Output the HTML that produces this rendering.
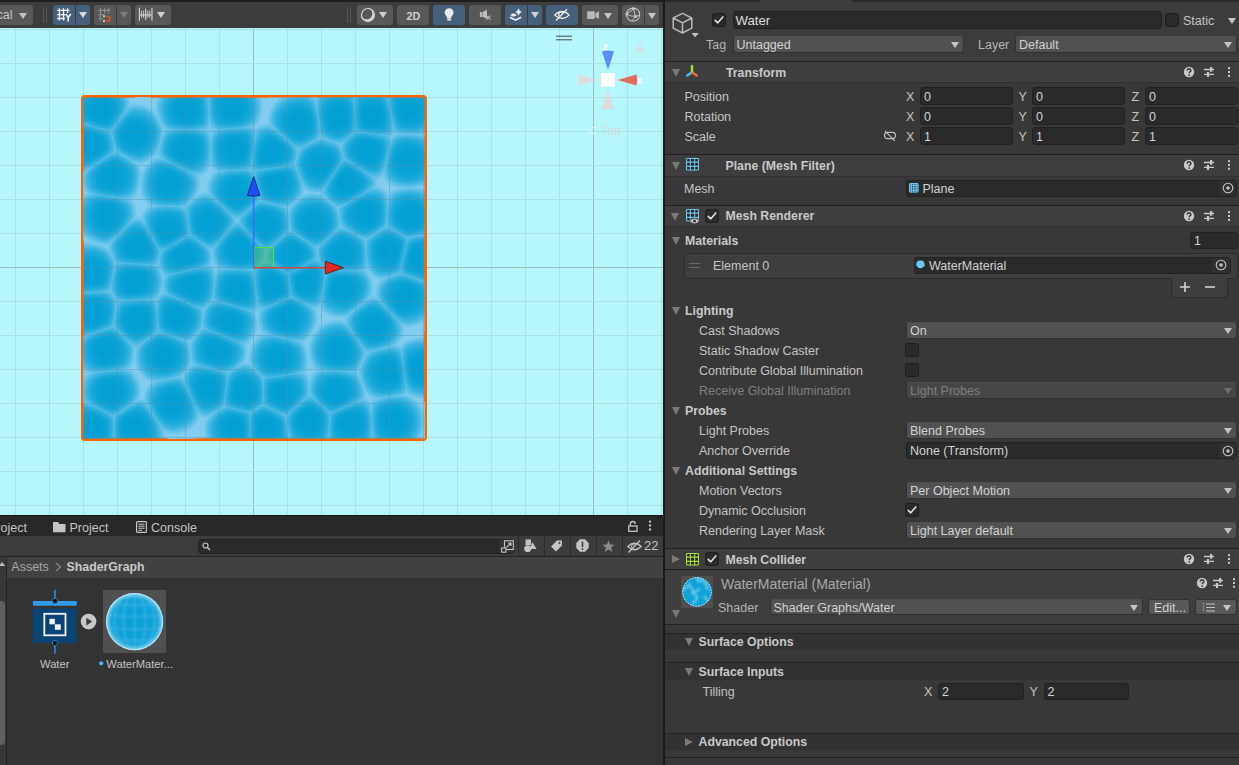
<!DOCTYPE html>
<html><head><meta charset="utf-8">
<style>
*{box-sizing:border-box;margin:0;padding:0}
html,body{width:1239px;height:765px;overflow:hidden;background:#191919;font-family:"Liberation Sans",sans-serif;font-size:12.5px;color:#c4c4c4}
.a{position:absolute}
svg.a{overflow:visible}
.t{position:absolute;white-space:nowrap;line-height:14px}
.b{font-weight:bold;font-size:12.3px;color:#c8c8c8}
.fld{position:absolute;background:#2a2a2a;border:1px solid #212121;border-radius:3px}
.dd{position:absolute;background:#515151;border:1px solid #303030;border-top-color:#4d4d4d;border-radius:3px}
.arr{position:absolute;width:0;height:0;border-left:4.5px solid transparent;border-right:4.5px solid transparent;border-top:6px solid #c4c4c4}
.tri{position:absolute;width:0;height:0;border-left:4.5px solid transparent;border-right:4.5px solid transparent;border-top:8px solid #7a7a7a}
.trir{position:absolute;width:0;height:0;border-top:4.5px solid transparent;border-bottom:4.5px solid transparent;border-left:8px solid #7a7a7a}
.cb{position:absolute;width:14px;height:14px;background:#2a2a2a;border:1px solid #1d1d1d;border-radius:3px}
.btn{position:absolute;top:5px;height:19.5px;background:#585858;border-radius:3px}
.blue{background:#46607c}
</style></head><body>
<div class="a" style="left:0.00px;top:0.00px;width:663.00px;height:2.00px;background:#1e1e1e"></div>
<div class="a" style="left:0.00px;top:2.00px;width:663.00px;height:26.00px;background:#3c3c3c"></div>
<div class="a" style="left:-10.00px;top:5px;width:43.00px;height:19.5px;background:#585858;border-radius:3px"></div>
<div class="t" style="left:-3.5px;top:8px;font-size:12.5px;color:#c4c4c4">cal</div>
<div class="arr" style="left:18.50px;top:12.50px;border-top-color:#c4c4c4"></div>
<div class="a" style="left:53.00px;top:5px;width:22.00px;height:19.5px;background:#46607c;border-radius:3px 0 0 3px"></div>
<div class="a" style="left:76.00px;top:5px;width:14.00px;height:19.5px;background:#46607c;border-radius:0 3px 3px 0"></div>
<div class="a" style="left:94.30px;top:5px;width:21.70px;height:19.5px;background:#585858;border-radius:3px 0 0 3px"></div>
<div class="a" style="left:117.00px;top:5px;width:13.70px;height:19.5px;background:#585858;border-radius:0 3px 3px 0"></div>
<div class="a" style="left:135.00px;top:5px;width:36.00px;height:19.5px;background:#585858;border-radius:3px"></div>
<div class="a" style="left:357.00px;top:5px;width:36.00px;height:19.5px;background:#585858;border-radius:3px"></div>
<div class="a" style="left:397.00px;top:5px;width:32.00px;height:19.5px;background:#585858;border-radius:3px"></div>
<div class="a" style="left:433.00px;top:5px;width:32.00px;height:19.5px;background:#46607c;border-radius:3px"></div>
<div class="a" style="left:469.00px;top:5px;width:32.00px;height:19.5px;background:#585858;border-radius:3px"></div>
<div class="a" style="left:505.00px;top:5px;width:22.00px;height:19.5px;background:#46607c;border-radius:3px 0 0 3px"></div>
<div class="a" style="left:528.00px;top:5px;width:14.00px;height:19.5px;background:#46607c;border-radius:0 3px 3px 0"></div>
<div class="a" style="left:546.00px;top:5px;width:32.00px;height:19.5px;background:#46607c;border-radius:3px"></div>
<div class="a" style="left:582.00px;top:5px;width:36.00px;height:19.5px;background:#585858;border-radius:3px"></div>
<div class="a" style="left:622.00px;top:5px;width:22.00px;height:19.5px;background:#585858;border-radius:3px 0 0 3px"></div>
<div class="a" style="left:645.00px;top:5px;width:13.80px;height:19.5px;background:#585858;border-radius:0 3px 3px 0"></div>
<div class="t" style="left:406.5px;top:8.5px;font-size:10.8px;font-weight:bold;color:#d0d0d0">2D</div>
<svg class="a" style="left:0;top:0" width="663" height="28"><rect x="43" y="7" width="1" height="16" fill="#565656"/><rect x="46" y="7" width="1" height="16" fill="#565656"/><rect x="347" y="7" width="1" height="16" fill="#565656"/><rect x="350" y="7" width="1" height="16" fill="#565656"/><path d="M57 10.3H69.5M57 14.6H65M57 18.5H65M59.4 8.3V20.4M63.5 8.3V20.4M67.6 8.3V13" stroke="#f0f0f0" stroke-width="1.3" fill="none"/><path d="M65.6 13.9L68.2 17.3L70.8 13.9M68.2 17.3V21.6" stroke="#f0f0f0" stroke-width="1.7" fill="none"/><path d="M98.5 10.4H110.4M98.5 14.6H103.5M98.5 18.5H103M100.4 8.3V20.5M104.6 8.3V13.5M108.7 8.3V13.5" stroke="#8c8c8c" stroke-width="1.2" fill="none"/><rect x="103" y="15.2" width="2" height="2" fill="#c8c8c8"/><rect x="103" y="20" width="2" height="2" fill="#c8c8c8"/><path d="M106 16.4H108.5A2.5 2.5 0 0 1 108.5 21.2H106" stroke="#d2572a" stroke-width="1.7" fill="none"/><path d="M139.4 7.8V20.8M152 7.8V20.8M145.7 8.8V20.1" stroke="#d8d8d8" stroke-width="1.1" fill="none"/><path d="M141.6 10.7V17.8M143.6 10.7V17.8M147.8 10.7V17.8M149.8 10.7V17.8" stroke="#d8d8d8" stroke-width="0.9" fill="none"/><path d="M139.4 15H152" stroke="#d8d8d8" stroke-width="1" fill="none"/><circle cx="367.9" cy="14.9" r="7" fill="#d0d0d0"/><circle cx="366.6" cy="13.6" r="5.7" fill="#585858"/><circle cx="367.9" cy="14.9" r="6.4" fill="none" stroke="#d0d0d0" stroke-width="1.2"/><circle cx="449.1" cy="12.6" r="4.4" fill="#ececec"/><rect x="446.8" y="15" width="4.6" height="3.2" fill="#ececec"/><rect x="447" y="18.6" width="4.2" height="1.8" rx="0.9" fill="#ececec"/><rect x="479.9" y="12" width="2" height="5" fill="#bdbdbd"/><path d="M482.5 12L487 9.8V18.5L482.5 17Z" fill="#bdbdbd"/><path d="M486 15.6L490.5 19.5M490.5 15.6L486 19.5" stroke="#bdbdbd" stroke-width="1.1"/><path d="M509.9 15L513.5 13.2L517.2 15L513.5 16.8Z" fill="#ececec"/><path d="M509.9 17.2L515.5 20.1L521.2 17.2" stroke="#ececec" stroke-width="1.7" fill="none"/><path d="M518.6 8.3Q519.2 11.4 522.1 12Q519.2 12.6 518.6 15.7Q518 12.6 515.1 12Q518 11.4 518.6 8.3Z" fill="#ececec"/><path d="M554.7 15.1Q562 8 569.2 15.1Q562 22 554.7 15.1Z" fill="none" stroke="#ececec" stroke-width="1.3"/><path d="M559.5 16.5A2.8 2.8 0 0 1 563.5 12.6" fill="none" stroke="#ececec" stroke-width="1.2"/><path d="M556.1 20.4L567 9.3" stroke="#ececec" stroke-width="1.4"/><rect x="587.1" y="11.2" width="7.7" height="7.8" rx="0.8" fill="#b8b8b8"/><path d="M595.3 13.4L599 11.2V19L595.3 16.8Z" fill="#b8b8b8"/><circle cx="633.1" cy="14.6" r="6.6" fill="none" stroke="#c8c8c8" stroke-width="1.1"/><path d="M626.8 14.1Q631 17.5 639.5 15.5M633.5 8.8L626.8 14.1M633.5 8.8L635.5 16.6L632 21" fill="none" stroke="#c8c8c8" stroke-width="0.9"/><circle cx="633.5" cy="8.8" r="1.5" fill="#c8c8c8"/><circle cx="626.8" cy="14.1" r="1.5" fill="#c8c8c8"/><circle cx="635.5" cy="16.6" r="1.5" fill="#c8c8c8"/></svg>
<div class="arr" style="left:78.50px;top:12.20px;border-top-color:#d8d8d8"></div>
<div class="arr" style="left:119.50px;top:12.20px;border-top-color:#7c7c7c"></div>
<div class="arr" style="left:156.50px;top:12.20px;border-top-color:#d0d0d0"></div>
<div class="arr" style="left:379.00px;top:12.20px;border-top-color:#d0d0d0"></div>
<div class="arr" style="left:530.50px;top:12.20px;border-top-color:#d0d0d0"></div>
<div class="arr" style="left:603.50px;top:12.60px;border-top-color:#c8c8c8"></div>
<div class="arr" style="left:647.70px;top:12.60px;border-top-color:#c8c8c8"></div>
<div class="a" style="left:0;top:28px;width:663px;height:487px;background:#b5f7fb;overflow:hidden">
<svg class="a" style="left:0;top:0" width="663" height="487"><rect x="15" y="0" width="1" height="487" fill="#a8e2e6"/><rect x="49" y="0" width="1" height="487" fill="#a8e2e6"/><rect x="83" y="0" width="1" height="487" fill="#a8e2e6"/><rect x="117" y="0" width="1" height="487" fill="#a8e2e6"/><rect x="151" y="0" width="1" height="487" fill="#a8e2e6"/><rect x="185" y="0" width="1" height="487" fill="#a8e2e6"/><rect x="219" y="0" width="1" height="487" fill="#a8e2e6"/><rect x="253" y="0" width="1" height="487" fill="#9cbcc0"/><rect x="287" y="0" width="1" height="487" fill="#a8e2e6"/><rect x="321" y="0" width="1" height="487" fill="#a8e2e6"/><rect x="355" y="0" width="1" height="487" fill="#a8e2e6"/><rect x="389" y="0" width="1" height="487" fill="#a8e2e6"/><rect x="423" y="0" width="1" height="487" fill="#a8e2e6"/><rect x="457" y="0" width="1" height="487" fill="#a8e2e6"/><rect x="491" y="0" width="1" height="487" fill="#a8e2e6"/><rect x="525" y="0" width="1" height="487" fill="#a8e2e6"/><rect x="559" y="0" width="1" height="487" fill="#a8e2e6"/><rect x="593" y="0" width="1" height="487" fill="#9cbcc0"/><rect x="627" y="0" width="1" height="487" fill="#a8e2e6"/><rect x="661" y="0" width="1" height="487" fill="#a8e2e6"/><rect x="0" y="1" width="663" height="1" fill="#a8e2e6"/><rect x="0" y="35" width="663" height="1" fill="#a8e2e6"/><rect x="0" y="69" width="663" height="1" fill="#a8e2e6"/><rect x="0" y="103" width="663" height="1" fill="#a8e2e6"/><rect x="0" y="137" width="663" height="1" fill="#a8e2e6"/><rect x="0" y="171" width="663" height="1" fill="#a8e2e6"/><rect x="0" y="205" width="663" height="1" fill="#a8e2e6"/><rect x="0" y="239" width="663" height="1" fill="#9cbcc0"/><rect x="0" y="273" width="663" height="1" fill="#a8e2e6"/><rect x="0" y="307" width="663" height="1" fill="#a8e2e6"/><rect x="0" y="341" width="663" height="1" fill="#a8e2e6"/><rect x="0" y="375" width="663" height="1" fill="#a8e2e6"/><rect x="0" y="409" width="663" height="1" fill="#a8e2e6"/><rect x="0" y="443" width="663" height="1" fill="#a8e2e6"/><rect x="0" y="477" width="663" height="1" fill="#a8e2e6"/></svg>
</div>
<div class="a" style="left:81.2px;top:95.2px;width:345.4px;height:345.4px;background:#ff6400;border-radius:4px"></div>
<svg class="a" style="left:84px;top:98px" width="340" height="340" viewBox="84 98 340 340"><defs><radialGradient id="wg" cx="0.5" cy="0.5" r="0.5"><stop offset="0.00" stop-color="#03a0d4"/><stop offset="0.05" stop-color="#03a0d4"/><stop offset="0.10" stop-color="#04a0d4"/><stop offset="0.15" stop-color="#06a1d5"/><stop offset="0.20" stop-color="#0ba3d6"/><stop offset="0.25" stop-color="#14a6d8"/><stop offset="0.30" stop-color="#23acdb"/><stop offset="0.35" stop-color="#3bb4e0"/><stop offset="0.40" stop-color="#5cc0e8"/><stop offset="0.45" stop-color="#82cdf0"/><stop offset="0.50" stop-color="#82cdf0"/><stop offset="0.55" stop-color="#82cdf0"/><stop offset="0.60" stop-color="#82cdf0"/><stop offset="0.65" stop-color="#82cdf0"/><stop offset="0.70" stop-color="#82cdf0"/><stop offset="0.75" stop-color="#82cdf0"/><stop offset="0.80" stop-color="#82cdf0"/><stop offset="0.85" stop-color="#82cdf0"/><stop offset="0.90" stop-color="#82cdf0"/><stop offset="0.95" stop-color="#82cdf0"/><stop offset="1.00" stop-color="#82cdf0"/></radialGradient><filter id="wb" x="-10%" y="-10%" width="120%" height="120%"><feGaussianBlur stdDeviation="2.8"/></filter><filter id="wb2" x="-10%" y="-10%" width="120%" height="120%"><feGaussianBlur stdDeviation="0.7"/></filter><clipPath id="wbox"><rect x="84" y="98" width="340" height="340"/></clipPath><clipPath id="wc0"><polygon points="136.3,97.7 111.6,132.8 83.2,124.7 83.2,97.4"/></clipPath><clipPath id="wc1"><polygon points="142.5,167.2 157.4,156.8 165.1,129.5 149.3,97.1 135.3,97.0 110.2,131.8 114.8,152.1"/></clipPath><clipPath id="wc2"><polygon points="210.8,130.3 209.3,97.5 148.0,97.7 163.4,130.3"/></clipPath><clipPath id="wc3"><polygon points="257.3,127.3 210.0,131.1 209.3,130.4 207.5,97.6 269.8,97.7 265.0,120.4"/></clipPath><clipPath id="wc4"><polygon points="83.8,173.1 116.5,151.7 112.0,131.4 83.7,123.1"/></clipPath><clipPath id="wc5"><polygon points="211.4,172.2 204.9,180.0 155.7,156.4 163.4,129.0 210.8,129.0 211.4,129.8"/></clipPath><clipPath id="wc6"><polygon points="257.2,126.0 209.9,129.8 209.9,172.2 251.9,170.2"/></clipPath><clipPath id="wc7"><polygon points="83.1,193.2 139.1,201.2 143.3,165.9 115.7,150.4 83.0,171.9"/></clipPath><clipPath id="wc8"><polygon points="204.3,188.8 185.8,207.6 140.1,206.2 137.5,201.1 141.5,165.7 156.2,155.2 205.4,179.0"/></clipPath><clipPath id="wc9"><polygon points="251.8,168.6 209.8,170.9 203.5,178.8 202.3,188.6 236.9,220.9 260.8,201.1 253.8,170.4"/></clipPath><clipPath id="wc10"><polygon points="139.2,200.1 83.3,192.0 83.3,240.9 106.7,247.4 140.1,213.9 141.9,205.3"/></clipPath><clipPath id="wc11"><polygon points="140.1,205.0 185.8,206.0 190.8,234.7 160.3,252.5 138.2,213.5"/></clipPath><clipPath id="wc12"><polygon points="211.7,251.3 189.0,235.0 184.4,206.2 203.2,187.7 237.9,219.8 237.9,220.7"/></clipPath><clipPath id="wc13"><polygon points="139.2,213.0 161.6,251.8 158.7,266.2 114.9,263.4 105.7,246.4"/></clipPath><clipPath id="wc14"><polygon points="214.3,265.3 162.8,276.8 157.0,265.8 159.6,251.4 190.1,233.5 212.5,250.1"/></clipPath><clipPath id="wc15"><polygon points="266.9,251.1 236.8,219.7 210.5,250.4 212.5,265.5 215.1,269.0 254.1,271.3 265.6,260.4"/></clipPath><clipPath id="wc16"><polygon points="263.1,120.0 268.0,97.4 316.0,97.2 321.7,138.1 298.5,150.4"/></clipPath><clipPath id="wc17"><polygon points="320.2,138.3 314.7,97.4 355.1,97.2 356.4,132.4 340.3,145.7"/></clipPath><clipPath id="wc18"><polygon points="392.5,137.1 395.3,134.7 388.8,97.3 353.8,97.3 354.9,132.5"/></clipPath><clipPath id="wc19"><polygon points="387.3,97.5 394.0,135.0 424.5,135.9 424.8,97.4"/></clipPath><clipPath id="wc20"><polygon points="256.0,125.8 250.4,170.0 252.4,171.9 295.9,165.2 299.5,149.2 263.8,119.1"/></clipPath><clipPath id="wc21"><polygon points="297.6,148.8 320.9,136.6 340.9,144.0 345.1,158.1 320.4,194.9 305.4,193.1 294.0,164.8"/></clipPath><clipPath id="wc22"><polygon points="343.1,158.7 339.2,144.5 355.1,130.9 392.6,135.8 382.3,183.6"/></clipPath><clipPath id="wc23"><polygon points="295.7,164.1 306.8,192.5 289.3,209.2 259.3,201.5 252.3,170.7"/></clipPath><clipPath id="wc24"><polygon points="337.6,209.4 383.1,183.3 382.9,182.7 344.0,157.4 319.5,194.3"/></clipPath><clipPath id="wc25"><polygon points="381.3,183.9 388.1,189.3 424.5,188.3 424.5,134.2 394.1,133.2 391.2,135.5 381.1,183.3"/></clipPath><clipPath id="wc26"><polygon points="288.9,230.8 317.2,249.5 342.0,226.5 338.8,207.9 320.7,192.9 305.6,191.3 288.0,207.8"/></clipPath><clipPath id="wc27"><polygon points="336.9,208.3 340.1,226.8 365.7,241.1 387.6,226.8 389.3,187.7 382.6,182.4"/></clipPath><clipPath id="wc28"><polygon points="424.6,235.6 407.8,239.2 385.9,226.7 388.0,187.7 424.5,186.6"/></clipPath><clipPath id="wc29"><polygon points="265.9,252.0 290.8,230.7 289.7,207.8 259.7,199.8 235.9,219.7 235.9,220.6"/></clipPath><clipPath id="wc30"><polygon points="316.5,258.8 325.8,271.5 368.0,271.4 366.5,239.5 340.9,225.4 316.1,248.3"/></clipPath><clipPath id="wc31"><polygon points="408.6,237.6 400.1,274.2 375.1,282.4 366.4,271.5 364.7,239.6 386.7,225.3"/></clipPath><clipPath id="wc32"><polygon points="264.9,250.9 289.8,229.4 318.0,248.3 318.5,258.7 288.0,274.9 263.7,260.2"/></clipPath><clipPath id="wc33"><polygon points="424.2,233.8 407.4,237.3 398.9,273.9 424.2,282.6"/></clipPath><clipPath id="wc34"><polygon points="83.8,239.2 83.7,293.8 110.7,292.1 116.7,262.4 107.3,245.5"/></clipPath><clipPath id="wc35"><polygon points="158.8,264.9 164.5,275.9 163.1,292.3 157.0,299.7 116.6,302.0 109.1,291.8 115.0,262.1"/></clipPath><clipPath id="wc36"><polygon points="216.7,267.8 213.7,300.6 204.1,310.7 161.2,292.2 162.6,275.8 214.0,264.3"/></clipPath><clipPath id="wc37"><polygon points="215.2,267.7 211.9,300.4 258.0,313.5 259.1,311.6 254.2,269.7"/></clipPath><clipPath id="wc38"><polygon points="83.7,337.7 83.6,291.9 110.6,290.6 118.2,300.9 114.3,327.0"/></clipPath><clipPath id="wc39"><polygon points="135.4,349.3 112.5,326.7 116.5,300.6 156.9,298.3 158.9,331.9"/></clipPath><clipPath id="wc40"><polygon points="157.2,332.0 155.5,298.4 161.7,291.1 204.6,309.6 203.0,328.2 190.3,343.4"/></clipPath><clipPath id="wc41"><polygon points="258.3,312.5 212.3,299.2 202.7,309.4 201.1,328.0 249.8,346.6 259.8,333.3"/></clipPath><clipPath id="wc42"><polygon points="134.7,369.1 83.3,374.6 83.1,336.3 113.8,325.4 136.4,348.3"/></clipPath><clipPath id="wc43"><polygon points="182.9,377.4 192.6,364.4 190.7,342.1 157.8,330.4 134.4,348.1 132.9,369.0 143.8,384.4"/></clipPath><clipPath id="wc44"><polygon points="190.8,364.6 228.8,373.6 247.9,361.3 250.1,345.7 201.5,327.0 188.9,342.3"/></clipPath><clipPath id="wc45"><polygon points="145.4,383.3 134.5,367.9 83.2,373.3 83.1,401.6 114.1,417.3 142.9,397.3"/></clipPath><clipPath id="wc46"><polygon points="195.8,438.8 202.7,421.8 182.6,375.7 143.6,383.0 141.0,396.9 168.2,439.0"/></clipPath><clipPath id="wc47"><polygon points="201.7,422.3 224.9,407.1 229.2,372.1 191.1,363.3 181.3,376.2"/></clipPath><clipPath id="wc48"><polygon points="227.7,372.0 247.0,360.0 264.3,377.5 264.3,405.5 250.4,413.8 223.4,406.9"/></clipPath><clipPath id="wc49"><polygon points="169.3,438.3 113.1,438.4 113.1,415.8 142.2,396.2"/></clipPath><clipPath id="wc50"><polygon points="83.3,438.7 83.7,400.4 114.9,415.8 114.9,438.4"/></clipPath><clipPath id="wc51"><polygon points="194.3,438.2 200.9,421.1 223.8,405.5 250.8,412.1 250.9,438.6"/></clipPath><clipPath id="wc52"><polygon points="264.4,259.1 288.9,273.3 292.3,297.3 257.9,311.7 252.8,269.9"/></clipPath><clipPath id="wc53"><polygon points="287.2,273.5 290.8,297.5 319.8,311.6 327.4,270.4 318.0,257.7"/></clipPath><clipPath id="wc54"><polygon points="318.7,311.4 325.8,270.1 368.0,270.2 376.5,281.3 374.7,294.5 343.4,320.3 322.5,318.7"/></clipPath><clipPath id="wc55"><polygon points="424.5,330.9 409.9,334.1 372.7,294.2 374.7,281.0 399.4,272.3 424.8,281.0"/></clipPath><clipPath id="wc56"><polygon points="257.4,310.7 291.7,295.7 320.4,310.5 324.1,317.9 307.3,343.8 258.0,333.4 256.4,312.6"/></clipPath><clipPath id="wc57"><polygon points="410.8,333.3 401.3,344.0 366.3,354.1 342.4,319.1 373.7,293.3"/></clipPath><clipPath id="wc58"><polygon points="305.7,342.8 309.8,370.5 358.5,373.1 367.6,353.2 343.5,318.3 322.7,316.9"/></clipPath><clipPath id="wc59"><polygon points="258.3,332.1 248.2,345.4 245.9,361.1 262.8,378.9 310.5,372.2 311.6,370.2 307.5,342.5"/></clipPath><clipPath id="wc60"><polygon points="367.0,398.2 356.8,372.4 365.8,352.4 400.9,342.5 407.9,395.3 370.1,400.4"/></clipPath><clipPath id="wc61"><polygon points="424.1,329.0 409.5,332.2 399.8,342.7 406.8,395.5 424.1,404.0"/></clipPath><clipPath id="wc62"><polygon points="310.5,394.6 310.3,371.2 262.6,377.5 262.6,405.5 286.2,417.2"/></clipPath><clipPath id="wc63"><polygon points="368.6,397.5 329.8,414.5 308.6,394.6 308.8,371.2 309.9,369.3 358.6,371.7"/></clipPath><clipPath id="wc64"><polygon points="290.3,438.4 287.0,415.8 263.4,403.9 249.4,412.1 249.3,438.6"/></clipPath><clipPath id="wc65"><polygon points="309.5,393.6 285.1,416.0 288.6,438.6 329.5,438.7 331.0,413.1"/></clipPath><clipPath id="wc66"><polygon points="368.2,396.6 329.2,413.0 327.9,438.6 373.5,438.5 371.3,398.8"/></clipPath><clipPath id="wc67"><polygon points="369.9,398.9 371.8,438.6 424.9,438.5 424.9,402.5 407.7,393.7"/></clipPath></defs><rect x="84" y="98" width="340" height="340" fill="#03a0d4"/><circle cx="100.7" cy="110.2" r="70" fill="url(#wg)" clip-path="url(#wc0)"/><circle cx="135.1" cy="134.7" r="70" fill="url(#wg)" clip-path="url(#wc1)"/><circle cx="186.2" cy="110.2" r="70" fill="url(#wg)" clip-path="url(#wc2)"/><circle cx="231.8" cy="108.0" r="70" fill="url(#wg)" clip-path="url(#wc3)"/><circle cx="90.7" cy="144.7" r="70" fill="url(#wg)" clip-path="url(#wc4)"/><circle cx="186.2" cy="149.1" r="70" fill="url(#wg)" clip-path="url(#wc5)"/><circle cx="235.1" cy="149.1" r="70" fill="url(#wg)" clip-path="url(#wc6)"/><circle cx="111.8" cy="176.9" r="70" fill="url(#wg)" clip-path="url(#wc7)"/><circle cx="169.6" cy="183.6" r="70" fill="url(#wg)" clip-path="url(#wc8)"/><circle cx="237.3" cy="191.3" r="70" fill="url(#wg)" clip-path="url(#wc9)"/><circle cx="106.2" cy="215.8" r="70" fill="url(#wg)" clip-path="url(#wc10)"/><circle cx="168.4" cy="229.1" r="70" fill="url(#wg)" clip-path="url(#wc11)"/><circle cx="208.4" cy="222.4" r="70" fill="url(#wg)" clip-path="url(#wc12)"/><circle cx="137.3" cy="246.9" r="70" fill="url(#wg)" clip-path="url(#wc13)"/><circle cx="184.0" cy="255.8" r="70" fill="url(#wg)" clip-path="url(#wc14)"/><circle cx="239.6" cy="249.1" r="70" fill="url(#wg)" clip-path="url(#wc15)"/><circle cx="298.4" cy="122.4" r="70" fill="url(#wg)" clip-path="url(#wc16)"/><circle cx="338.4" cy="116.9" r="70" fill="url(#wg)" clip-path="url(#wc17)"/><circle cx="371.8" cy="115.8" r="70" fill="url(#wg)" clip-path="url(#wc18)"/><circle cx="409.6" cy="109.1" r="70" fill="url(#wg)" clip-path="url(#wc19)"/><circle cx="271.8" cy="153.6" r="70" fill="url(#wg)" clip-path="url(#wc20)"/><circle cx="320.7" cy="164.7" r="70" fill="url(#wg)" clip-path="url(#wc21)"/><circle cx="367.3" cy="151.3" r="70" fill="url(#wg)" clip-path="url(#wc22)"/><circle cx="276.2" cy="182.4" r="70" fill="url(#wg)" clip-path="url(#wc23)"/><circle cx="347.3" cy="182.4" r="70" fill="url(#wg)" clip-path="url(#wc24)"/><circle cx="408.0" cy="160.0" r="70" fill="url(#wg)" clip-path="url(#wc25)"/><circle cx="314.0" cy="222.4" r="70" fill="url(#wg)" clip-path="url(#wc26)"/><circle cx="365.1" cy="213.6" r="70" fill="url(#wg)" clip-path="url(#wc27)"/><circle cx="409.6" cy="215.8" r="70" fill="url(#wg)" clip-path="url(#wc28)"/><circle cx="265.1" cy="224.7" r="70" fill="url(#wg)" clip-path="url(#wc29)"/><circle cx="342.9" cy="253.6" r="70" fill="url(#wg)" clip-path="url(#wc30)"/><circle cx="389.6" cy="251.3" r="70" fill="url(#wg)" clip-path="url(#wc31)"/><circle cx="291.8" cy="255.8" r="70" fill="url(#wg)" clip-path="url(#wc32)"/><circle cx="418.4" cy="258.0" r="70" fill="url(#wg)" clip-path="url(#wc33)"/><circle cx="90.7" cy="272.4" r="70" fill="url(#wg)" clip-path="url(#wc34)"/><circle cx="135.1" cy="281.3" r="70" fill="url(#wg)" clip-path="url(#wc35)"/><circle cx="190.7" cy="285.8" r="70" fill="url(#wg)" clip-path="url(#wc36)"/><circle cx="237.3" cy="290.2" r="70" fill="url(#wg)" clip-path="url(#wc37)"/><circle cx="92.9" cy="312.4" r="70" fill="url(#wg)" clip-path="url(#wc38)"/><circle cx="137.3" cy="319.1" r="70" fill="url(#wg)" clip-path="url(#wc39)"/><circle cx="177.3" cy="316.9" r="70" fill="url(#wg)" clip-path="url(#wc40)"/><circle cx="228.4" cy="321.3" r="70" fill="url(#wg)" clip-path="url(#wc41)"/><circle cx="106.2" cy="350.2" r="70" fill="url(#wg)" clip-path="url(#wc42)"/><circle cx="164.0" cy="354.7" r="70" fill="url(#wg)" clip-path="url(#wc43)"/><circle cx="217.3" cy="350.2" r="70" fill="url(#wg)" clip-path="url(#wc44)"/><circle cx="110.7" cy="392.4" r="70" fill="url(#wg)" clip-path="url(#wc45)"/><circle cx="172.9" cy="403.6" r="70" fill="url(#wg)" clip-path="url(#wc46)"/><circle cx="208.4" cy="388.0" r="70" fill="url(#wg)" clip-path="url(#wc47)"/><circle cx="244.0" cy="392.4" r="70" fill="url(#wg)" clip-path="url(#wc48)"/><circle cx="135.1" cy="428.0" r="70" fill="url(#wg)" clip-path="url(#wc49)"/><circle cx="92.9" cy="428.0" r="70" fill="url(#wg)" clip-path="url(#wc50)"/><circle cx="235.1" cy="428.0" r="70" fill="url(#wg)" clip-path="url(#wc51)"/><circle cx="274.0" cy="285.8" r="70" fill="url(#wg)" clip-path="url(#wc52)"/><circle cx="305.1" cy="281.3" r="70" fill="url(#wg)" clip-path="url(#wc53)"/><circle cx="342.9" cy="288.0" r="70" fill="url(#wg)" clip-path="url(#wc54)"/><circle cx="405.1" cy="296.9" r="70" fill="url(#wg)" clip-path="url(#wc55)"/><circle cx="287.3" cy="316.9" r="70" fill="url(#wg)" clip-path="url(#wc56)"/><circle cx="374.0" cy="325.8" r="70" fill="url(#wg)" clip-path="url(#wc57)"/><circle cx="338.4" cy="350.2" r="70" fill="url(#wg)" clip-path="url(#wc58)"/><circle cx="278.4" cy="359.1" r="70" fill="url(#wg)" clip-path="url(#wc59)"/><circle cx="387.3" cy="372.4" r="70" fill="url(#wg)" clip-path="url(#wc60)"/><circle cx="420.7" cy="368.0" r="70" fill="url(#wg)" clip-path="url(#wc61)"/><circle cx="282.9" cy="392.4" r="70" fill="url(#wg)" clip-path="url(#wc62)"/><circle cx="336.2" cy="392.4" r="70" fill="url(#wg)" clip-path="url(#wc63)"/><circle cx="265.1" cy="428.0" r="70" fill="url(#wg)" clip-path="url(#wc64)"/><circle cx="309.6" cy="421.3" r="70" fill="url(#wg)" clip-path="url(#wc65)"/><circle cx="349.6" cy="423.6" r="70" fill="url(#wg)" clip-path="url(#wc66)"/><circle cx="394.0" cy="421.3" r="70" fill="url(#wg)" clip-path="url(#wc67)"/><g clip-path="url(#wbox)"><path d="M-773.0 -124.3L111.1 131.9M111.1 131.9L143.4 86.6M143.4 -947.2L143.4 86.6M158.1 -946.7L210.0 129.7M143.4 86.6L164.1 129.7M164.1 129.7L210.0 129.7M317.8 627.1L330.1 413.5M317.8 627.1L286.1 416.2M286.1 416.2L309.6 394.6M330.1 413.5L309.6 394.6M374.5 1714.7L317.8 627.1M250.1 1711.0L250.1 412.8M250.1 412.8L263.4 404.9M263.4 404.9L286.1 416.2M309.5 371.8L309.6 394.6M309.5 371.8L263.4 378.1M263.4 378.1L263.4 404.9M111.1 131.9L115.5 151.4M164.1 129.7L156.6 156.1M156.6 156.1L142.3 166.2M115.5 151.4L142.3 166.2M110.0 291.4L117.3 301.3M110.0 291.4L115.7 262.8M163.5 276.1L158.0 265.5M163.5 276.1L162.2 292.0M162.2 292.0L156.3 299.0M117.3 301.3L156.3 299.0M115.7 262.8L158.0 265.5M-956.2 370.2L-11.0 370.2M-955.6 350.0L110.0 291.4M117.3 301.3L113.5 326.4M113.5 326.4L-11.0 370.2M114.0 1608.6L114.0 416.3M114.0 416.3L38.8 378.7M-11.0 370.2L38.8 378.7M1594.8 113.8L953.4 151.7M327.2 -945.3L323.5 -347.8M323.5 -347.8L346.8 -135.1M953.4 151.7L394.5 134.1M346.8 -135.1L394.5 134.1M346.8 -135.1L355.6 131.8M394.5 134.1L391.8 136.4M355.6 131.8L391.8 136.4M106.7 246.4L139.1 214.0M106.7 246.4L-31.4 208.5M-31.4 208.5L58.2 189.0M58.2 189.0L138.3 200.6M139.1 214.0L140.9 205.6M140.9 205.6L138.3 200.6M115.7 262.8L106.7 246.4M160.6 251.6L139.1 214.0M158.0 265.5L160.6 251.6M-954.1 208.5L-31.4 208.5M115.5 151.4L58.2 189.0M142.3 166.2L138.3 200.6M185.2 206.8L189.9 234.5M189.9 234.5L160.6 251.6M185.2 206.8L140.9 205.6M263.4 378.1L246.9 361.0M250.1 412.8L224.2 406.4M246.9 361.0L228.4 372.8M224.2 406.4L228.4 372.8M185.2 206.8L203.3 188.7M156.6 156.1L204.4 179.1M204.4 179.1L203.3 188.7M323.5 -347.8L297.3 -33.8M355.6 131.8L340.2 144.7M297.3 -33.8L320.9 137.6M340.2 144.7L320.9 137.6M202.1 327.8L189.8 342.5M202.1 327.8L249.1 345.8M249.1 345.8L246.9 361.0M228.4 372.8L191.6 364.1M189.8 342.5L191.6 364.1M162.2 292.0L203.6 309.8M156.3 299.0L158.0 331.4M203.6 309.8L202.1 327.8M189.8 342.5L158.0 331.4M113.5 326.4L135.4 348.3M158.0 331.4L135.4 348.3M38.8 378.7L133.8 368.6M135.4 348.3L133.8 368.6M400.5 343.4L366.6 353.1M400.5 343.4L407.2 394.6M366.6 353.1L357.8 372.4M357.8 372.4L367.6 397.4M407.2 394.6L370.6 399.6M370.6 399.6L367.6 397.4M310.7 369.9L357.8 372.4M309.5 371.8L310.7 369.9M330.1 413.5L367.6 397.4M438.9 1717.2L370.6 399.6M1473.9 928.9L407.2 394.6M375.6 281.5L399.7 273.3M375.6 281.5L373.7 294.3M373.7 294.3L409.8 333.1M399.7 273.3L510.2 311.1M510.2 311.1L409.8 333.1M343.4 319.3L366.6 353.1M343.4 319.3L373.7 294.3M400.5 343.4L409.8 333.1M1709.3 286.0L510.2 311.1M323.1 317.8L306.7 343.0M323.1 317.8L319.4 310.7M319.4 310.7L291.5 296.7M306.7 343.0L258.9 332.9M291.5 296.7L258.4 310.9M258.9 332.9L257.4 312.8M257.4 312.8L258.4 310.9M310.7 369.9L306.7 343.0M343.4 319.3L323.1 317.8M326.5 270.8L319.4 310.7M367.2 270.8L326.5 270.8M367.2 270.8L375.6 281.5M249.1 345.8L258.9 332.9M203.6 309.8L212.9 300.0M212.9 300.0L257.4 312.8M341.0 226.4L365.6 240.1M367.2 270.8L365.6 240.1M326.5 270.8L317.5 258.6M341.0 226.4L317.1 248.5M317.1 248.5L317.5 258.6M291.5 296.7L288.2 273.9M317.5 258.6L288.2 273.9M210.0 129.7L210.7 130.4M204.4 179.1L210.7 171.5M210.7 130.4L210.7 171.5M388.6 188.5L386.8 226.3M388.6 188.5L687.3 179.9M386.8 226.3L407.8 238.2M687.3 179.9L407.8 238.2M365.6 240.1L386.8 226.3M399.7 273.3L407.8 238.2M953.4 151.7L687.3 179.9M381.9 182.7L344.1 158.4M381.9 182.7L382.1 183.2M382.1 183.2L337.9 208.4M344.1 158.4L320.5 193.9M320.5 193.9L337.9 208.4M391.8 136.4L381.9 182.7M340.2 144.7L344.1 158.4M388.6 188.5L382.1 183.2M341.0 226.4L337.9 208.4M142.0 397.1L144.4 383.5M142.0 397.1L185.1 464.0M144.4 383.5L182.2 376.6M182.2 376.6L201.8 421.3M185.1 464.0L201.8 421.3M114.0 416.3L142.0 397.1M133.8 368.6L144.4 383.5M185.1 1659.9L185.1 464.0M191.6 364.1L182.2 376.6M224.2 406.4L201.8 421.3M305.9 192.2L320.5 193.9M305.9 192.2L288.8 208.3M317.1 248.5L289.9 230.4M288.8 208.3L289.9 230.4M253.2 171.2L251.2 169.4M253.2 171.2L295.0 164.8M251.2 169.4L256.5 126.7M295.0 164.8L298.5 149.4M298.5 149.4L264.1 120.1M264.1 120.1L256.5 126.7M210.7 171.5L251.2 169.4M236.9 219.9L259.9 200.7M259.9 200.7L253.2 171.2M203.3 188.7L236.9 219.9M259.9 200.7L288.8 208.3M305.9 192.2L295.0 164.8M210.7 130.4L256.5 126.7M320.9 137.6L298.5 149.4M297.3 -33.8L264.1 120.1M236.9 220.7L265.9 251.0M236.9 220.7L211.5 250.3M211.5 250.3L213.3 265.0M253.6 270.5L215.9 268.4M253.6 270.5L264.7 260.0M213.3 265.0L215.9 268.4M264.7 260.0L265.9 251.0M236.9 219.9L236.9 220.7M289.9 230.4L265.9 251.0M189.9 234.5L211.5 250.3M163.5 276.1L213.3 265.0M258.4 310.9L253.6 270.5M212.9 300.0L215.9 268.4M288.2 273.9L264.7 260.0" stroke="#82cdf0" stroke-width="5" stroke-opacity="0.42" fill="none" filter="url(#wb)"/><path d="M-773.0 -124.3L111.1 131.9M111.1 131.9L143.4 86.6M143.4 -947.2L143.4 86.6M158.1 -946.7L210.0 129.7M143.4 86.6L164.1 129.7M164.1 129.7L210.0 129.7M317.8 627.1L330.1 413.5M317.8 627.1L286.1 416.2M286.1 416.2L309.6 394.6M330.1 413.5L309.6 394.6M374.5 1714.7L317.8 627.1M250.1 1711.0L250.1 412.8M250.1 412.8L263.4 404.9M263.4 404.9L286.1 416.2M309.5 371.8L309.6 394.6M309.5 371.8L263.4 378.1M263.4 378.1L263.4 404.9M111.1 131.9L115.5 151.4M164.1 129.7L156.6 156.1M156.6 156.1L142.3 166.2M115.5 151.4L142.3 166.2M110.0 291.4L117.3 301.3M110.0 291.4L115.7 262.8M163.5 276.1L158.0 265.5M163.5 276.1L162.2 292.0M162.2 292.0L156.3 299.0M117.3 301.3L156.3 299.0M115.7 262.8L158.0 265.5M-956.2 370.2L-11.0 370.2M-955.6 350.0L110.0 291.4M117.3 301.3L113.5 326.4M113.5 326.4L-11.0 370.2M114.0 1608.6L114.0 416.3M114.0 416.3L38.8 378.7M-11.0 370.2L38.8 378.7M1594.8 113.8L953.4 151.7M327.2 -945.3L323.5 -347.8M323.5 -347.8L346.8 -135.1M953.4 151.7L394.5 134.1M346.8 -135.1L394.5 134.1M346.8 -135.1L355.6 131.8M394.5 134.1L391.8 136.4M355.6 131.8L391.8 136.4M106.7 246.4L139.1 214.0M106.7 246.4L-31.4 208.5M-31.4 208.5L58.2 189.0M58.2 189.0L138.3 200.6M139.1 214.0L140.9 205.6M140.9 205.6L138.3 200.6M115.7 262.8L106.7 246.4M160.6 251.6L139.1 214.0M158.0 265.5L160.6 251.6M-954.1 208.5L-31.4 208.5M115.5 151.4L58.2 189.0M142.3 166.2L138.3 200.6M185.2 206.8L189.9 234.5M189.9 234.5L160.6 251.6M185.2 206.8L140.9 205.6M263.4 378.1L246.9 361.0M250.1 412.8L224.2 406.4M246.9 361.0L228.4 372.8M224.2 406.4L228.4 372.8M185.2 206.8L203.3 188.7M156.6 156.1L204.4 179.1M204.4 179.1L203.3 188.7M323.5 -347.8L297.3 -33.8M355.6 131.8L340.2 144.7M297.3 -33.8L320.9 137.6M340.2 144.7L320.9 137.6M202.1 327.8L189.8 342.5M202.1 327.8L249.1 345.8M249.1 345.8L246.9 361.0M228.4 372.8L191.6 364.1M189.8 342.5L191.6 364.1M162.2 292.0L203.6 309.8M156.3 299.0L158.0 331.4M203.6 309.8L202.1 327.8M189.8 342.5L158.0 331.4M113.5 326.4L135.4 348.3M158.0 331.4L135.4 348.3M38.8 378.7L133.8 368.6M135.4 348.3L133.8 368.6M400.5 343.4L366.6 353.1M400.5 343.4L407.2 394.6M366.6 353.1L357.8 372.4M357.8 372.4L367.6 397.4M407.2 394.6L370.6 399.6M370.6 399.6L367.6 397.4M310.7 369.9L357.8 372.4M309.5 371.8L310.7 369.9M330.1 413.5L367.6 397.4M438.9 1717.2L370.6 399.6M1473.9 928.9L407.2 394.6M375.6 281.5L399.7 273.3M375.6 281.5L373.7 294.3M373.7 294.3L409.8 333.1M399.7 273.3L510.2 311.1M510.2 311.1L409.8 333.1M343.4 319.3L366.6 353.1M343.4 319.3L373.7 294.3M400.5 343.4L409.8 333.1M1709.3 286.0L510.2 311.1M323.1 317.8L306.7 343.0M323.1 317.8L319.4 310.7M319.4 310.7L291.5 296.7M306.7 343.0L258.9 332.9M291.5 296.7L258.4 310.9M258.9 332.9L257.4 312.8M257.4 312.8L258.4 310.9M310.7 369.9L306.7 343.0M343.4 319.3L323.1 317.8M326.5 270.8L319.4 310.7M367.2 270.8L326.5 270.8M367.2 270.8L375.6 281.5M249.1 345.8L258.9 332.9M203.6 309.8L212.9 300.0M212.9 300.0L257.4 312.8M341.0 226.4L365.6 240.1M367.2 270.8L365.6 240.1M326.5 270.8L317.5 258.6M341.0 226.4L317.1 248.5M317.1 248.5L317.5 258.6M291.5 296.7L288.2 273.9M317.5 258.6L288.2 273.9M210.0 129.7L210.7 130.4M204.4 179.1L210.7 171.5M210.7 130.4L210.7 171.5M388.6 188.5L386.8 226.3M388.6 188.5L687.3 179.9M386.8 226.3L407.8 238.2M687.3 179.9L407.8 238.2M365.6 240.1L386.8 226.3M399.7 273.3L407.8 238.2M953.4 151.7L687.3 179.9M381.9 182.7L344.1 158.4M381.9 182.7L382.1 183.2M382.1 183.2L337.9 208.4M344.1 158.4L320.5 193.9M320.5 193.9L337.9 208.4M391.8 136.4L381.9 182.7M340.2 144.7L344.1 158.4M388.6 188.5L382.1 183.2M341.0 226.4L337.9 208.4M142.0 397.1L144.4 383.5M142.0 397.1L185.1 464.0M144.4 383.5L182.2 376.6M182.2 376.6L201.8 421.3M185.1 464.0L201.8 421.3M114.0 416.3L142.0 397.1M133.8 368.6L144.4 383.5M185.1 1659.9L185.1 464.0M191.6 364.1L182.2 376.6M224.2 406.4L201.8 421.3M305.9 192.2L320.5 193.9M305.9 192.2L288.8 208.3M317.1 248.5L289.9 230.4M288.8 208.3L289.9 230.4M253.2 171.2L251.2 169.4M253.2 171.2L295.0 164.8M251.2 169.4L256.5 126.7M295.0 164.8L298.5 149.4M298.5 149.4L264.1 120.1M264.1 120.1L256.5 126.7M210.7 171.5L251.2 169.4M236.9 219.9L259.9 200.7M259.9 200.7L253.2 171.2M203.3 188.7L236.9 219.9M259.9 200.7L288.8 208.3M305.9 192.2L295.0 164.8M210.7 130.4L256.5 126.7M320.9 137.6L298.5 149.4M297.3 -33.8L264.1 120.1M236.9 220.7L265.9 251.0M236.9 220.7L211.5 250.3M211.5 250.3L213.3 265.0M253.6 270.5L215.9 268.4M253.6 270.5L264.7 260.0M213.3 265.0L215.9 268.4M264.7 260.0L265.9 251.0M236.9 219.9L236.9 220.7M289.9 230.4L265.9 251.0M189.9 234.5L211.5 250.3M163.5 276.1L213.3 265.0M258.4 310.9L253.6 270.5M212.9 300.0L215.9 268.4M288.2 273.9L264.7 260.0" stroke="#82cdf0" stroke-width="1.4" stroke-opacity="0.25" fill="none" filter="url(#wb2)"/></g></svg>
<svg class="a" style="left:84px;top:98px" width="340" height="340" viewBox="84 98 340 340">
<rect x="117" y="98" width="1" height="340" fill="#5a8fa8" fill-opacity="0.4"/>
<rect x="84" y="131" width="340" height="1" fill="#5a8fa8" fill-opacity="0.4"/>
<rect x="151" y="98" width="1" height="340" fill="#5a8fa8" fill-opacity="0.4"/>
<rect x="84" y="165" width="340" height="1" fill="#5a8fa8" fill-opacity="0.4"/>
<rect x="185" y="98" width="1" height="340" fill="#5a8fa8" fill-opacity="0.4"/>
<rect x="84" y="199" width="340" height="1" fill="#5a8fa8" fill-opacity="0.4"/>
<rect x="219" y="98" width="1" height="340" fill="#5a8fa8" fill-opacity="0.4"/>
<rect x="84" y="233" width="340" height="1" fill="#5a8fa8" fill-opacity="0.4"/>
<rect x="253" y="98" width="1" height="340" fill="#5a8fa8" fill-opacity="0.4"/>
<rect x="84" y="267" width="340" height="1" fill="#5a8fa8" fill-opacity="0.4"/>
<rect x="287" y="98" width="1" height="340" fill="#5a8fa8" fill-opacity="0.4"/>
<rect x="84" y="301" width="340" height="1" fill="#5a8fa8" fill-opacity="0.4"/>
<rect x="321" y="98" width="1" height="340" fill="#5a8fa8" fill-opacity="0.4"/>
<rect x="84" y="335" width="340" height="1" fill="#5a8fa8" fill-opacity="0.4"/>
<rect x="355" y="98" width="1" height="340" fill="#5a8fa8" fill-opacity="0.4"/>
<rect x="84" y="369" width="340" height="1" fill="#5a8fa8" fill-opacity="0.4"/>
<rect x="389" y="98" width="1" height="340" fill="#5a8fa8" fill-opacity="0.4"/>
<rect x="84" y="403" width="340" height="1" fill="#5a8fa8" fill-opacity="0.4"/>
<rect x="423" y="98" width="1" height="340" fill="#5a8fa8" fill-opacity="0.4"/>
<rect x="84" y="437" width="340" height="1" fill="#5a8fa8" fill-opacity="0.4"/>
</svg>
<svg class="a" style="left:0;top:0" width="663" height="515"><rect x="254.5" y="247.5" width="19" height="20" fill="#3fb87a" fill-opacity="0.55" stroke="#58e03a" stroke-width="1"/><path d="M253.7 196 V267.7" stroke="#3a6cff" stroke-width="1.6"/><path d="M253.7 267.7 H326" stroke="#d2463c" stroke-width="1.6"/><path d="M253.7 176.5 L260 195.5 Q253.7 197 247.4 195.5 Z" fill="#1f4cf5" stroke="#14255a" stroke-width="0.8"/><path d="M343.5 267.7 L325.6 261.3 Q324.5 267.7 325.6 274 Z" fill="#e02a22" stroke="#4a1410" stroke-width="0.8"/></svg>
<svg class="a" style="left:0;top:0" width="663" height="515"><path d="M556 36.2 H572 M556 39.8 H572" stroke="#4a4a4a" stroke-width="1"/><rect x="601" y="73" width="14" height="13.6" fill="#ffffff"/><path d="M602 51.5 Q608 49.5 614 51.5 L608 69.7 Z" fill="#5c8cf5"/><path d="M636.5 74.5 Q638 80 636.5 85.5 L617.7 80 Z" fill="#e8685a"/><path d="M579.3 74.5 Q578 80 579.3 85.5 L598 80 Z" fill="#dcdcdc"/><path d="M602 108.3 Q608 110 614 108.3 L608 89.5 Z" fill="#dcdcdc"/><text x="603" y="50" font-family="Liberation Sans" font-size="10" font-weight="bold" fill="#ffffff">z</text><text x="637" y="84" font-family="Liberation Sans" font-size="10" font-weight="bold" fill="#ffffff">x</text><rect x="637" y="47" width="7" height="5.5" fill="#dcdcdc" fill-opacity="0.8"/><path d="M638.5 47 V45 A2 2 0 0 1 642.5 45" fill="none" stroke="#dcdcdc" stroke-width="1"/><path d="M596 126 L588.5 130.5 L596 135" fill="none" stroke="#e6f4f4" stroke-width="1"/><text x="601" y="134.5" font-family="Liberation Sans" font-size="12.5" fill="#d6dcdc">Top</text></svg>
<div class="a" style="left:663px;top:0;width:2px;height:765px;background:#191919"></div>
<div class="a" style="left:665px;top:0;width:574px;height:765px;background:#383838;overflow:hidden">
<div class="a" style="left:0.0px;top:0.0px;width:574.0px;height:2.0px;background:#282828"></div>
<div class="a" style="left:95.0px;top:0.0px;width:92.0px;height:2.0px;background:#3c3c3c"></div>
<div class="a" style="left:0.0px;top:2.0px;width:574.0px;height:59.0px;background:#3c3c3c"></div>
<svg class="a" style="left:5px;top:11px" width="30" height="28" viewBox="0 0 30 28"><path d="M12.5 2.3 L21.8 7 L21.8 17.2 L12.5 22 L3.2 17.2 L3.2 7 Z M3.2 7 L12.5 11.8 L21.8 7 M12.5 11.8 V22" fill="none" stroke="#b8b8b8" stroke-width="1.5" stroke-linejoin="round"/><path d="M21.5 22 L28.7 22 L25.1 26.2 Z" fill="#c8c8c8"/></svg>
<div class="cb" style="left:47.0px;top:13.0px"></div>
<svg class="a" style="left:47.0px;top:13.0px" width="14" height="14" viewBox="0 0 14 14"><path d="M3.2 7.3 L5.8 9.8 L10.8 3.9" fill="none" stroke="#e0e0e0" stroke-width="1.6" stroke-linecap="round" stroke-linejoin="round"/></svg>
<div class="fld" style="left:67.5px;top:11.0px;width:429.0px;height:18.0px"></div>
<div class="t " style="left:70.5px;top:14.1px;font-size:13.2px;color:#dcdcdc">Water</div>
<div class="cb" style="left:500.0px;top:12.5px"></div>
<div class="t " style="left:518.0px;top:13.8px;">Static</div>
<div class="arr" style="left:563px;top:17.5px"></div>
<div class="t " style="left:41.0px;top:37.8px;color:#b4b4b4">Tag</div>
<div class="dd" style="left:67.5px;top:36.0px;width:231.5px;height:17.0px;background:#515151"></div>
<div class="t " style="left:71.5px;top:38.3px;color:#d2d2d2">Untagged</div>
<div class="arr" style="left:286.0px;top:42.0px;"></div>
<div class="t " style="left:313.0px;top:37.8px;color:#b4b4b4">Layer</div>
<div class="dd" style="left:350.0px;top:36.0px;width:222.0px;height:17.0px;background:#515151"></div>
<div class="t " style="left:354.0px;top:38.3px;color:#d2d2d2">Default</div>
<div class="arr" style="left:559.0px;top:42.0px;"></div>
<div class="a" style="left:0.0px;top:61.0px;width:574.0px;height:1.0px;background:#1f1f1f"></div>
<div class="a" style="left:0.0px;top:62.0px;width:574.0px;height:20.0px;background:#3e3e3e"></div>
<div class="a" style="left:0.0px;top:82.0px;width:574.0px;height:1.0px;background:#303030"></div>
<div class="tri" style="left:6.5px;top:69.0px"></div>
<svg class="a" style="left:19px;top:64px" width="16" height="16" viewBox="0 0 16 16"><path d="M8 2 V7.5" stroke="#a6e23c" stroke-width="2.4" stroke-linecap="round"/><path d="M7 9 L3.2 11.5" stroke="#59b8f0" stroke-width="2.4" stroke-linecap="round"/><path d="M9 9 L12.8 11.5" stroke="#f06a3a" stroke-width="2.4" stroke-linecap="round"/></svg>
<div class="t b" style="left:61.0px;top:65.5px;">Transform</div>
<svg class="a" style="left:518.0px;top:66.0px" width="52" height="12" viewBox="0 0 52 12"><circle cx="6" cy="6" r="5.2" fill="#c8c8c8"/><path d="M4.2 4.6 Q4.3 2.7 6.1 2.7 Q7.9 2.8 7.9 4.4 Q7.9 5.4 6.9 5.9 Q6.2 6.3 6.2 7.2" fill="none" stroke="#383838" stroke-width="1.5"/><circle cx="6.2" cy="9.1" r="0.9" fill="#383838"/><path d="M21 3.5 H31 M21 8.4 H31" stroke="#c8c8c8" stroke-width="1.3"/><path d="M28.1 1 V5.8 M25 6 V11" stroke="#c8c8c8" stroke-width="2.2"/><rect x="45" y="1.2" width="2" height="2" fill="#c8c8c8"/><rect x="45" y="5" width="2" height="2" fill="#c8c8c8"/><rect x="45" y="8.8" width="2" height="2" fill="#c8c8c8"/></svg>
<div class="t " style="left:19.5px;top:89.8px;">Position</div>
<div class="t " style="left:241.0px;top:89.8px;">X</div>
<div class="fld" style="left:255.0px;top:87.0px;width:92.5px;height:18.0px"></div>
<div class="t " style="left:259.0px;top:89.8px;color:#d2d2d2">0</div>
<div class="t " style="left:353.5px;top:89.8px;">Y</div>
<div class="fld" style="left:367.0px;top:87.0px;width:93.0px;height:18.0px"></div>
<div class="t " style="left:371.0px;top:89.8px;color:#d2d2d2">0</div>
<div class="t " style="left:466.5px;top:89.8px;">Z</div>
<div class="fld" style="left:480.0px;top:87.0px;width:92.5px;height:18.0px"></div>
<div class="t " style="left:484.0px;top:89.8px;color:#d2d2d2">0</div>
<div class="t " style="left:19.5px;top:109.8px;">Rotation</div>
<div class="t " style="left:241.0px;top:109.8px;">X</div>
<div class="fld" style="left:255.0px;top:107.0px;width:92.5px;height:18.0px"></div>
<div class="t " style="left:259.0px;top:109.8px;color:#d2d2d2">0</div>
<div class="t " style="left:353.5px;top:109.8px;">Y</div>
<div class="fld" style="left:367.0px;top:107.0px;width:93.0px;height:18.0px"></div>
<div class="t " style="left:371.0px;top:109.8px;color:#d2d2d2">0</div>
<div class="t " style="left:466.5px;top:109.8px;">Z</div>
<div class="fld" style="left:480.0px;top:107.0px;width:92.5px;height:18.0px"></div>
<div class="t " style="left:484.0px;top:109.8px;color:#d2d2d2">0</div>
<div class="t " style="left:19.5px;top:129.8px;">Scale</div>
<div class="t " style="left:241.0px;top:129.8px;">X</div>
<div class="fld" style="left:255.0px;top:127.0px;width:92.5px;height:18.0px"></div>
<div class="t " style="left:259.0px;top:129.8px;color:#d2d2d2">1</div>
<div class="t " style="left:353.5px;top:129.8px;">Y</div>
<div class="fld" style="left:367.0px;top:127.0px;width:93.0px;height:18.0px"></div>
<div class="t " style="left:371.0px;top:129.8px;color:#d2d2d2">1</div>
<div class="t " style="left:466.5px;top:129.8px;">Z</div>
<div class="fld" style="left:480.0px;top:127.0px;width:92.5px;height:18.0px"></div>
<div class="t " style="left:484.0px;top:129.8px;color:#d2d2d2">1</div>
<svg class="a" style="left:218px;top:130px" width="14" height="12" viewBox="0 0 14 12"><rect x="1.5" y="2.4" width="11" height="6.2" rx="3.1" fill="none" stroke="#c0c0c0" stroke-width="1.15"/><path d="M1.9 0.9 L11.8 10.8" stroke="#c0c0c0" stroke-width="1.15"/></svg>
<div class="a" style="left:0.0px;top:154.0px;width:574.0px;height:1.0px;background:#1f1f1f"></div>
<div class="a" style="left:0.0px;top:155.0px;width:574.0px;height:20.5px;background:#3e3e3e"></div>
<div class="a" style="left:0.0px;top:175.5px;width:574.0px;height:1.0px;background:#303030"></div>
<div class="tri" style="left:6.5px;top:162.0px"></div>
<svg class="a" style="left:21.0px;top:158.0px" width="17" height="16.5" viewBox="0 0 17 16.5"><rect x="0.55" y="0.55" width="11.9" height="11.4" fill="#2a2424" stroke="#6cc6f0" stroke-width="1.1" rx="0.8"/><path d="M4.33 0 V12.5 M0 4.17 H13" stroke="#6cc6f0" stroke-width="1.1"/><path d="M8.67 0 V12.5 M0 8.33 H13" stroke="#6cc6f0" stroke-width="1.1"/></svg>
<div class="t b" style="left:60.5px;top:158.5px;">Plane (Mesh Filter)</div>
<svg class="a" style="left:518.0px;top:159.0px" width="52" height="12" viewBox="0 0 52 12"><circle cx="6" cy="6" r="5.2" fill="#c8c8c8"/><path d="M4.2 4.6 Q4.3 2.7 6.1 2.7 Q7.9 2.8 7.9 4.4 Q7.9 5.4 6.9 5.9 Q6.2 6.3 6.2 7.2" fill="none" stroke="#383838" stroke-width="1.5"/><circle cx="6.2" cy="9.1" r="0.9" fill="#383838"/><path d="M21 3.5 H31 M21 8.4 H31" stroke="#c8c8c8" stroke-width="1.3"/><path d="M28.1 1 V5.8 M25 6 V11" stroke="#c8c8c8" stroke-width="2.2"/><rect x="45" y="1.2" width="2" height="2" fill="#c8c8c8"/><rect x="45" y="5" width="2" height="2" fill="#c8c8c8"/><rect x="45" y="8.8" width="2" height="2" fill="#c8c8c8"/></svg>
<div class="t " style="left:19.0px;top:181.8px;">Mesh</div>
<div class="fld" style="left:240.5px;top:179.5px;width:331.5px;height:17.5px"></div>
<div class="a" style="left:554.0px;top:180.5px;width:17.0px;height:15.5px;background:#303030"></div>
<svg class="a" style="left:244.0px;top:183.0px" width="13.5" height="13.5" viewBox="0 0 13.5 13.5"><rect x="0.55" y="0.55" width="8.4" height="8.4" fill="#2a2424" stroke="#6cc6f0" stroke-width="1.1" rx="0.8"/><path d="M2.38 0 V9.5 M0 2.38 H9.5" stroke="#6cc6f0" stroke-width="1.1"/><path d="M4.75 0 V9.5 M0 4.75 H9.5" stroke="#6cc6f0" stroke-width="1.1"/><path d="M7.12 0 V9.5 M0 7.12 H9.5" stroke="#6cc6f0" stroke-width="1.1"/></svg>
<div class="t " style="left:257.5px;top:182.3px;color:#d2d2d2">Plane</div>
<svg class="a" style="left:557.0px;top:182.0px" width="12" height="12" viewBox="0 0 12 12"><circle cx="6" cy="6" r="4.8" fill="none" stroke="#c4c4c4" stroke-width="1.1"/><circle cx="6" cy="6" r="1.8" fill="#c4c4c4"/></svg>
<div class="a" style="left:0.0px;top:205.0px;width:574.0px;height:1.0px;background:#1f1f1f"></div>
<div class="a" style="left:0.0px;top:206.0px;width:574.0px;height:20.0px;background:#3e3e3e"></div>
<div class="a" style="left:0.0px;top:226.0px;width:574.0px;height:1.0px;background:#303030"></div>
<div class="tri" style="left:6.0px;top:213.0px"></div>
<svg class="a" style="left:21.0px;top:208.5px" width="17" height="16.5" viewBox="0 0 17 16.5"><rect x="0.55" y="0.55" width="11.9" height="11.4" fill="#2a2424" stroke="#6cc6f0" stroke-width="1.1" rx="0.8"/><path d="M4.33 0 V12.5 M0 4.17 H13" stroke="#6cc6f0" stroke-width="1.1"/><path d="M8.67 0 V12.5 M0 8.33 H13" stroke="#6cc6f0" stroke-width="1.1"/><path d="M3.5 12.0 Q8.5 6.0 13.5 12.0 Q8.5 18.0 3.5 12.0Z" fill="#c8c8c8" stroke="#3e3e3e" stroke-width="0.8"/><circle cx="8.5" cy="12.0" r="1.6" fill="#3e3e3e"/></svg>
<div class="cb" style="left:40.0px;top:209.0px"></div>
<svg class="a" style="left:40.0px;top:209.0px" width="14" height="14" viewBox="0 0 14 14"><path d="M3.2 7.3 L5.8 9.8 L10.8 3.9" fill="none" stroke="#e0e0e0" stroke-width="1.6" stroke-linecap="round" stroke-linejoin="round"/></svg>
<div class="t b" style="left:60.5px;top:209.0px;">Mesh Renderer</div>
<svg class="a" style="left:518.0px;top:209.5px" width="52" height="12" viewBox="0 0 52 12"><circle cx="6" cy="6" r="5.2" fill="#c8c8c8"/><path d="M4.2 4.6 Q4.3 2.7 6.1 2.7 Q7.9 2.8 7.9 4.4 Q7.9 5.4 6.9 5.9 Q6.2 6.3 6.2 7.2" fill="none" stroke="#383838" stroke-width="1.5"/><circle cx="6.2" cy="9.1" r="0.9" fill="#383838"/><path d="M21 3.5 H31 M21 8.4 H31" stroke="#c8c8c8" stroke-width="1.3"/><path d="M28.1 1 V5.8 M25 6 V11" stroke="#c8c8c8" stroke-width="2.2"/><rect x="45" y="1.2" width="2" height="2" fill="#c8c8c8"/><rect x="45" y="5" width="2" height="2" fill="#c8c8c8"/><rect x="45" y="8.8" width="2" height="2" fill="#c8c8c8"/></svg>
<div class="tri" style="left:6.5px;top:237.0px"></div>
<div class="t b" style="left:20.0px;top:233.5px;">Materials</div>
<div class="fld" style="left:525.0px;top:231.5px;width:47.5px;height:17.5px"></div>
<div class="t " style="left:529.0px;top:234.1px;color:#d2d2d2">1</div>
<div class="a" style="left:18.5px;top:252.5px;width:554px;height:26px;background:#3e3e3e;border:1px solid #2b2b2b;border-radius:3px"></div>
<div class="a" style="left:23.5px;top:263.0px;width:11.0px;height:1.2px;background:#6a6a6a"></div>
<div class="a" style="left:23.5px;top:267.0px;width:11.0px;height:1.2px;background:#6a6a6a"></div>
<div class="t " style="left:48.0px;top:259.3px;">Element 0</div>
<div class="fld" style="left:248.5px;top:256.5px;width:317.0px;height:17.5px"></div>
<div class="a" style="left:547.0px;top:257.5px;width:17.5px;height:15.5px;background:#303030"></div>
<svg class="a" style="left:249px;top:259px" width="12" height="12" viewBox="0 0 12 12"><circle cx="6" cy="6" r="4.8" fill="#2a5a78"/><circle cx="6.5" cy="5.5" r="4" fill="#6cc6f0"/><path d="M2 7 A4.5 4.5 0 0 0 10 8" fill="none" stroke="#1e1e1e" stroke-width="1.2"/></svg>
<div class="t " style="left:264.0px;top:259.3px;color:#d2d2d2">WaterMaterial</div>
<svg class="a" style="left:550.0px;top:259.0px" width="12" height="12" viewBox="0 0 12 12"><circle cx="6" cy="6" r="4.8" fill="none" stroke="#c4c4c4" stroke-width="1.1"/><circle cx="6" cy="6" r="1.8" fill="#c4c4c4"/></svg>
<div class="a" style="left:505.5px;top:278px;width:57px;height:19.5px;background:#3e3e3e;border:1px solid #2b2b2b;border-top:none;border-radius:0 0 3px 3px"></div>
<svg class="a" style="left:513px;top:281px" width="40" height="12" viewBox="0 0 40 12"><path d="M2 6 H12 M7 1 V11" stroke="#d2d2d2" stroke-width="1.6"/><path d="M27 6 H37" stroke="#d2d2d2" stroke-width="1.6"/></svg>
<div class="tri" style="left:6.5px;top:307.0px"></div>
<div class="t b" style="left:20.0px;top:303.5px;">Lighting</div>
<div class="t " style="left:34.0px;top:324.3px;color:#c4c4c4">Cast Shadows</div>
<div class="dd" style="left:241.0px;top:322.0px;width:331.0px;height:16.5px;background:#515151"></div>
<div class="t " style="left:245.0px;top:324.1px;color:#d2d2d2">On</div>
<div class="arr" style="left:559.0px;top:327.8px;"></div>
<div class="t " style="left:34.0px;top:344.3px;color:#c4c4c4">Static Shadow Caster</div>
<div class="cb" style="left:240.0px;top:343.0px"></div>
<div class="t " style="left:34.0px;top:364.3px;color:#c4c4c4">Contribute Global Illumination</div>
<div class="cb" style="left:240.0px;top:363.0px"></div>
<div class="t " style="left:34.0px;top:384.3px;color:#7f7f7f">Receive Global Illumination</div>
<div class="dd" style="left:241.0px;top:382.0px;width:331.0px;height:16.5px;background:#464646"></div>
<div class="t " style="left:245.0px;top:384.1px;color:#7f7f7f">Light Probes</div>
<div class="arr" style="left:559.0px;top:387.8px;border-top-color:#6f6f6f"></div>
<div class="tri" style="left:6.5px;top:407.0px"></div>
<div class="t b" style="left:20.0px;top:403.5px;">Probes</div>
<div class="t " style="left:34.0px;top:424.3px;color:#c4c4c4">Light Probes</div>
<div class="dd" style="left:241.0px;top:422.0px;width:331.0px;height:16.5px;background:#515151"></div>
<div class="t " style="left:245.0px;top:424.1px;color:#d2d2d2">Blend Probes</div>
<div class="arr" style="left:559.0px;top:427.8px;"></div>
<div class="t " style="left:34.0px;top:444.3px;color:#c4c4c4">Anchor Override</div>
<div class="fld" style="left:241.0px;top:441.5px;width:331.0px;height:17.5px"></div>
<div class="t " style="left:245.0px;top:444.1px;color:#d2d2d2">None (Transform)</div>
<div class="a" style="left:554.0px;top:442.5px;width:17.0px;height:15.5px;background:#303030"></div>
<svg class="a" style="left:557.0px;top:444.5px" width="12" height="12" viewBox="0 0 12 12"><circle cx="6" cy="6" r="4.8" fill="none" stroke="#c4c4c4" stroke-width="1.1"/><circle cx="6" cy="6" r="1.8" fill="#c4c4c4"/></svg>
<div class="tri" style="left:6.5px;top:467.0px"></div>
<div class="t b" style="left:20.0px;top:463.5px;">Additional Settings</div>
<div class="t " style="left:34.0px;top:484.3px;color:#c4c4c4">Motion Vectors</div>
<div class="dd" style="left:241.0px;top:482.0px;width:331.0px;height:16.5px;background:#515151"></div>
<div class="t " style="left:245.0px;top:484.1px;color:#d2d2d2">Per Object Motion</div>
<div class="arr" style="left:559.0px;top:487.8px;"></div>
<div class="t " style="left:34.0px;top:504.3px;color:#c4c4c4">Dynamic Occlusion</div>
<div class="cb" style="left:240.0px;top:503.0px"></div>
<svg class="a" style="left:240.0px;top:503.0px" width="14" height="14" viewBox="0 0 14 14"><path d="M3.2 7.3 L5.8 9.8 L10.8 3.9" fill="none" stroke="#e0e0e0" stroke-width="1.6" stroke-linecap="round" stroke-linejoin="round"/></svg>
<div class="t " style="left:34.0px;top:524.3px;color:#c4c4c4">Rendering Layer Mask</div>
<div class="dd" style="left:241.0px;top:522.0px;width:331.0px;height:16.5px;background:#515151"></div>
<div class="t " style="left:245.0px;top:524.0px;color:#d2d2d2">Light Layer default</div>
<div class="arr" style="left:559.0px;top:527.8px;"></div>
<div class="a" style="left:0.0px;top:548.0px;width:574.0px;height:1.0px;background:#1f1f1f"></div>
<div class="a" style="left:0.0px;top:549.0px;width:574.0px;height:20.0px;background:#3e3e3e"></div>
<div class="a" style="left:0.0px;top:569.0px;width:574.0px;height:1.0px;background:#1f1f1f"></div>
<div class="trir" style="left:7.0px;top:555.0px"></div>
<svg class="a" style="left:21.0px;top:552.5px" width="17" height="16.5" viewBox="0 0 17 16.5"><rect x="0.55" y="0.55" width="11.9" height="11.4" fill="#2a2424" stroke="#a6e23c" stroke-width="1.1" rx="0.8"/><path d="M4.33 0 V12.5 M0 4.17 H13" stroke="#a6e23c" stroke-width="1.1"/><path d="M8.67 0 V12.5 M0 8.33 H13" stroke="#a6e23c" stroke-width="1.1"/></svg>
<div class="cb" style="left:40.0px;top:552.0px"></div>
<svg class="a" style="left:40.0px;top:552.0px" width="14" height="14" viewBox="0 0 14 14"><path d="M3.2 7.3 L5.8 9.8 L10.8 3.9" fill="none" stroke="#e0e0e0" stroke-width="1.6" stroke-linecap="round" stroke-linejoin="round"/></svg>
<div class="t b" style="left:60.5px;top:552.5px;">Mesh Collider</div>
<svg class="a" style="left:518.0px;top:553.0px" width="52" height="12" viewBox="0 0 52 12"><circle cx="6" cy="6" r="5.2" fill="#c8c8c8"/><path d="M4.2 4.6 Q4.3 2.7 6.1 2.7 Q7.9 2.8 7.9 4.4 Q7.9 5.4 6.9 5.9 Q6.2 6.3 6.2 7.2" fill="none" stroke="#383838" stroke-width="1.5"/><circle cx="6.2" cy="9.1" r="0.9" fill="#383838"/><path d="M21 3.5 H31 M21 8.4 H31" stroke="#c8c8c8" stroke-width="1.3"/><path d="M28.1 1 V5.8 M25 6 V11" stroke="#c8c8c8" stroke-width="2.2"/><rect x="45" y="1.2" width="2" height="2" fill="#c8c8c8"/><rect x="45" y="5" width="2" height="2" fill="#c8c8c8"/><rect x="45" y="8.8" width="2" height="2" fill="#c8c8c8"/></svg>
<div class="a" style="left:0.0px;top:570.0px;width:574.0px;height:54.0px;background:#3e3e3e"></div>
<div class="a" style="left:16.2px;top:576.2px;width:31.6px;height:31.4px;background:#4f4f4f"></div>
<div class="a" style="left:-665px;top:0;width:1239px;height:765px"><svg class="a" style="left:680px;top:575px" width="34" height="34" viewBox="680 575 34 34"><defs><clipPath id="spc"><circle cx="697" cy="591.9" r="14.6"/></clipPath><filter id="spf" filterUnits="userSpaceOnUse" x="675" y="570" width="44" height="44"><feGaussianBlur stdDeviation="1"/></filter></defs>
<circle cx="697" cy="591.9" r="14.6" fill="#0ea2d8"/>
<g clip-path="url(#spc)"><path d="M688.5 583 L697.7 598.8 M691 594 L700 589 M700 579 L705.5 583 L708 590 M704 596 L709.4 602.7 M683 590 L688 586 M692 604 L697 599 M697 577 L699 583" fill="none" stroke="#a8e0f8" stroke-width="2.4" stroke-opacity="0.6" filter="url(#spf)"/></g>
<circle cx="697" cy="591.9" r="14.3" fill="none" stroke="#e8f8ff" stroke-width="1" stroke-dasharray="1.6 1.2"/></svg></div>
<div class="tri" style="left:6.5px;top:610.0px"></div>
<div class="t " style="left:56.0px;top:577.3px;font-size:14px;color:#a8a8a8">WaterMaterial (Material)</div>
<svg class="a" style="left:531.0px;top:577.0px" width="52" height="12" viewBox="0 0 52 12"><circle cx="6" cy="6" r="5.2" fill="#c8c8c8"/><path d="M4.2 4.6 Q4.3 2.7 6.1 2.7 Q7.9 2.8 7.9 4.4 Q7.9 5.4 6.9 5.9 Q6.2 6.3 6.2 7.2" fill="none" stroke="#383838" stroke-width="1.5"/><circle cx="6.2" cy="9.1" r="0.9" fill="#383838"/><path d="M17 3.5 H27 M17 8.4 H27" stroke="#c8c8c8" stroke-width="1.3"/><path d="M24.1 1 V5.8 M21 6 V11" stroke="#c8c8c8" stroke-width="2.2"/><rect x="37" y="1.2" width="2" height="2" fill="#c8c8c8"/><rect x="37" y="5" width="2" height="2" fill="#c8c8c8"/><rect x="37" y="8.8" width="2" height="2" fill="#c8c8c8"/></svg>
<div class="t " style="left:53.0px;top:601.3px;color:#b4b4b4">Shader</div>
<div class="dd" style="left:104.5px;top:599.0px;width:373.5px;height:16.0px;background:#515151"></div>
<div class="t " style="left:108.5px;top:600.8px;color:#d2d2d2">Shader Graphs/Water</div>
<div class="arr" style="left:465.0px;top:604.5px;"></div>
<div class="a" style="left:483px;top:599px;width:42px;height:16px;background:#585858;border:1px solid #303030;border-radius:3px"></div>
<div class="t " style="left:489.0px;top:601.3px;color:#d2d2d2">Edit...</div>
<div class="a" style="left:530px;top:599px;width:42px;height:16px;background:#585858;border:1px solid #303030;border-radius:3px"></div>
<svg class="a" style="left:537px;top:602px" width="14" height="11" viewBox="0 0 14 11"><path d="M4 2 H13 M4 5.5 H13 M4 9 H13" stroke="#c4c4c4" stroke-width="1.2"/><path d="M1.5 1 V10" stroke="#c4c4c4" stroke-width="0.9" stroke-dasharray="1 1.2"/></svg>
<div class="arr" style="left:558px;top:605px"></div>
<div class="a" style="left:0.0px;top:623.5px;width:574.0px;height:1.0px;background:#232323"></div>
<div class="a" style="left:0.0px;top:632.5px;width:574.0px;height:1.0px;background:#232323"></div>
<div class="a" style="left:0.0px;top:633.5px;width:574.0px;height:16.5px;background:#323232"></div>
<div class="tri" style="left:19.5px;top:638.0px"></div>
<div class="t b" style="left:33.5px;top:634.5px;">Surface Options</div>
<div class="a" style="left:0.0px;top:662.0px;width:574.0px;height:1.0px;background:#232323"></div>
<div class="a" style="left:0.0px;top:663.0px;width:574.0px;height:17.0px;background:#323232"></div>
<div class="tri" style="left:19.5px;top:668.0px"></div>
<div class="t b" style="left:33.5px;top:664.5px;">Surface Inputs</div>
<div class="t " style="left:37.5px;top:685.3px;">Tilling</div>
<div class="t " style="left:259.0px;top:685.3px;">X</div>
<div class="fld" style="left:273.0px;top:682.5px;width:86.0px;height:17.5px"></div>
<div class="t " style="left:277.0px;top:685.0px;color:#d2d2d2">2</div>
<div class="t " style="left:364.5px;top:685.3px;">Y</div>
<div class="fld" style="left:378.5px;top:682.5px;width:85.0px;height:17.5px"></div>
<div class="t " style="left:382.5px;top:685.0px;color:#d2d2d2">2</div>
<div class="a" style="left:0.0px;top:733.0px;width:574.0px;height:1.0px;background:#232323"></div>
<div class="a" style="left:0.0px;top:734.0px;width:574.0px;height:16.0px;background:#323232"></div>
<div class="trir" style="left:20.0px;top:737.5px"></div>
<div class="t b" style="left:33.5px;top:734.5px;">Advanced Options</div>
<div class="a" style="left:0.0px;top:757.0px;width:574.0px;height:1.0px;background:#232323"></div>
</div>
<div class="a" style="left:0.00px;top:515.00px;width:663.00px;height:250.00px;background:#333333"></div>
<div class="a" style="left:0.00px;top:515.00px;width:663.00px;height:1.50px;background:#191919"></div>
<div class="a" style="left:0;top:516px;width:663px;height:19.5px;background:#282828;border-radius:0 4px 0 0"></div>
<div class="t" style="left:-12.00px;top:521.00px;color:#c4c4c4">Project</div>
<svg class="a" style="left:52.5px;top:522px" width="13" height="10.5" viewBox="0 0 13 10.5"><path d="M0 0 H5 L6.5 2 H12.5 V10.2 H0 Z" fill="#c4c4c4"/></svg>
<div class="t" style="left:69.50px;top:521.00px;color:#c4c4c4">Project</div>
<svg class="a" style="left:135.5px;top:521px" width="11" height="12" viewBox="0 0 11 12"><rect x="0.6" y="0.6" width="9.8" height="10.8" rx="1" fill="none" stroke="#c4c4c4" stroke-width="1.2"/><path d="M2.5 3.2 H8.5 M2.5 5.2 H8.5 M2.5 7.2 H8.5 M2.5 9.2 H6" stroke="#c4c4c4" stroke-width="1.1"/></svg>
<div class="t" style="left:151.00px;top:521.00px;color:#c4c4c4">Console</div>
<svg class="a" style="left:628px;top:520.5px" width="10" height="11" viewBox="0 0 10 11"><rect x="0.7" y="5" width="8.3" height="5.3" fill="none" stroke="#c4c4c4" stroke-width="1.3"/><path d="M2.3 5 V3 A2.5 2.5 0 0 1 7.3 3" fill="none" stroke="#c4c4c4" stroke-width="1.3"/></svg>
<svg class="a" style="left:648px;top:520px" width="4" height="11" viewBox="0 0 4 11"><circle cx="2" cy="1.6" r="1.2" fill="#c4c4c4"/><circle cx="2" cy="5.5" r="1.2" fill="#c4c4c4"/><circle cx="2" cy="9.4" r="1.2" fill="#c4c4c4"/></svg>
<div class="a" style="left:0.00px;top:535.50px;width:663.00px;height:20.50px;background:#3c3c3c"></div>
<div class="a" style="left:0.00px;top:556.00px;width:663.00px;height:1.00px;background:#232323"></div>
<div class="a" style="left:198px;top:538.7px;width:317px;height:15px;background:#2a2a2a;border:1px solid #212121;border-radius:4px"></div>
<svg class="a" style="left:202px;top:541.5px" width="9" height="9" viewBox="0 0 9 9"><circle cx="3.5" cy="3.5" r="2.5" fill="none" stroke="#c4c4c4" stroke-width="1.2"/><path d="M5.2 5.2 L8 8" stroke="#c4c4c4" stroke-width="1.5"/></svg>
<div class="a" style="left:499.00px;top:539.70px;width:16.00px;height:13.00px;background:#333333;border-radius:0 3px 3px 0"></div>
<svg class="a" style="left:501px;top:539.5px" width="13" height="13" viewBox="0 0 13 13"><rect x="3.5" y="0.7" width="8.8" height="8.8" fill="none" stroke="#c4c4c4" stroke-width="1.1"/><rect x="0.7" y="8" width="4.2" height="4.2" fill="#333" stroke="#c4c4c4" stroke-width="1.1"/><path d="M5.5 7.5 L10 3 M7 3 H10 V6" fill="none" stroke="#c4c4c4" stroke-width="1.1"/></svg>
<div class="a" style="left:518.00px;top:536.00px;width:1.00px;height:20.00px;background:#2b2b2b"></div>
<div class="a" style="left:544.00px;top:536.00px;width:1.00px;height:20.00px;background:#2b2b2b"></div>
<div class="a" style="left:569.80px;top:536.00px;width:1.00px;height:20.00px;background:#2b2b2b"></div>
<div class="a" style="left:595.70px;top:536.00px;width:1.00px;height:20.00px;background:#2b2b2b"></div>
<div class="a" style="left:621.70px;top:536.00px;width:1.00px;height:20.00px;background:#2b2b2b"></div>
<svg class="a" style="left:524px;top:539px" width="15" height="14" viewBox="0 0 15 14"><rect x="1.5" y="0.5" width="5.5" height="5.5" fill="#c4c4c4"/><circle cx="3.7" cy="9.7" r="3.4" fill="#c4c4c4"/><path d="M8.5 3 L12.5 10 H5.5Z" fill="#c4c4c4"/></svg>
<svg class="a" style="left:550px;top:540px" width="13" height="12" viewBox="0 0 13 12"><path d="M7 0.5 H12 V5.5 L6 11.5 L1 6.5 Z" fill="#c4c4c4"/><circle cx="9.5" cy="3" r="1" fill="#3c3c3c"/></svg>
<svg class="a" style="left:576px;top:539px" width="13" height="13" viewBox="0 0 13 13"><path d="M4 0.3 H9 L12.7 4 V9 L9 12.7 H4 L0.3 9 V4Z" fill="#c4c4c4"/><path d="M6.5 2.5 V8" stroke="#3c3c3c" stroke-width="1.6"/><circle cx="6.5" cy="10" r="0.9" fill="#3c3c3c"/></svg>
<svg class="a" style="left:602px;top:539.5px" width="13" height="13" viewBox="0 0 13 13"><path d="M6.5 0.5 L8.1 4.6 L12.5 4.8 L9.1 7.6 L10.2 11.9 L6.5 9.5 L2.8 11.9 L3.9 7.6 L0.5 4.8 L4.9 4.6Z" fill="#8a8a8a"/></svg>
<svg class="a" style="left:627px;top:539.5px" width="15" height="13" viewBox="0 0 15 13"><path d="M0.8 6.5 Q7.5 0 14.2 6.5 Q7.5 13 0.8 6.5Z" fill="none" stroke="#c4c4c4" stroke-width="1.2"/><path d="M4.5 7.5 A3 3 0 0 1 8.5 4" fill="none" stroke="#c4c4c4" stroke-width="1.1"/><path d="M1.5 12.5 L13 0.5" stroke="#c4c4c4" stroke-width="1.3"/></svg>
<div class="t" style="left:644.00px;top:539.00px;font-size:13px;color:#c4c4c4">22</div>
<div class="a" style="left:7.00px;top:557.00px;width:656.00px;height:20.50px;background:#414141"></div>
<div class="a" style="left:0.00px;top:557.00px;width:6.30px;height:208.00px;background:#383838"></div>
<div class="a" style="left:6.30px;top:557.00px;width:1.00px;height:208.00px;background:#232323"></div>
<div class="a" style="left:0;top:601px;width:5px;height:143.5px;background:#5f5f5f;border-radius:0 4px 4px 0"></div>
<svg class="a" style="left:0;top:561px" width="6" height="6" viewBox="0 0 6 6"><path d="M-1 5 L2 1 L5 5Z" fill="#c4c4c4"/></svg>
<div class="t" style="left:11.30px;top:560.00px;color:#a8a8a8">Assets</div>
<svg class="a" style="left:54.5px;top:562px" width="7" height="10" viewBox="0 0 7 10"><path d="M1 1 L5.5 5 L1 9" fill="none" stroke="#8a8a8a" stroke-width="1.2"/></svg>
<div class="t" style="left:66.60px;top:560.00px;font-weight:bold;font-size:12.3px;color:#c8c8c8">ShaderGraph</div>
<svg class="a" style="left:30px;top:588px" width="50" height="68" viewBox="30 588 50 68"><path d="M54.9 589.8 V601 M54.9 643 V653.8" stroke="#2f8fe0" stroke-width="1.6"/><rect x="32.9" y="601" width="43.9" height="4.8" rx="1.2" fill="#2e9af0"/><rect x="32.9" y="608.6" width="43.9" height="34.5" rx="1.5" fill="#0a4475"/><rect x="44.3" y="613.8" width="21.2" height="21.5" fill="none" stroke="#f2f2f2" stroke-width="1.8"/><rect x="49.4" y="618.8" width="5.5" height="5.5" fill="#f2f2f2"/><rect x="54.9" y="624.3" width="5.9" height="5.5" fill="#f2f2f2"/><circle cx="54.9" cy="601" r="2.6" fill="#050505" stroke="#2f8fe0" stroke-width="0.8"/><circle cx="54.9" cy="643" r="2.6" fill="#050505" stroke="#2f8fe0" stroke-width="0.8"/></svg>
<svg class="a" style="left:80px;top:612.5px" width="18" height="18" viewBox="0 0 18 18"><circle cx="8.6" cy="8.6" r="7.8" fill="#c8c8c8"/><path d="M6.3 4.8 L12.2 8.6 L6.3 12.4Z" fill="#3a3a3a"/></svg>
<div class="a" style="left:102.70px;top:589.80px;width:63.50px;height:63.50px;background:#505050"></div>
<svg class="a" style="left:103.9px;top:590.7px" width="61.2" height="61.2" viewBox="103.9 590.7 61.2 61.2"><defs><radialGradient id="sp1r" cx="0.5" cy="0.5" r="0.5"><stop offset="0" stop-color="#0aa0d6" stop-opacity="0"/><stop offset="0.8" stop-color="#5cc0ec" stop-opacity="0.1"/><stop offset="0.94" stop-color="#a8e0f8" stop-opacity="0.55"/><stop offset="1" stop-color="#e8f8ff" stop-opacity="1"/></radialGradient><clipPath id="sp1c"><circle cx="134.5" cy="621.3" r="28.6"/></clipPath><filter id="sp1f"><feGaussianBlur stdDeviation="1.0"/></filter></defs><circle cx="134.5" cy="621.3" r="28.6" fill="#0aa0d6"/><g clip-path="url(#sp1c)"><path d="M134.50 592.70A26.42 28.60 0 0 1 134.50 649.90M134.50 592.70A20.22 28.60 0 0 1 134.50 649.90M134.50 592.70A10.94 28.60 0 0 1 134.50 649.90M134.50 592.70A0.00 28.60 0 0 0 134.50 649.90M134.50 592.70A10.94 28.60 0 0 0 134.50 649.90M134.50 592.70A20.22 28.60 0 0 0 134.50 649.90M134.50 592.70A26.42 28.60 0 0 0 134.50 649.90M122.09 595.53Q134.50 598.03 146.91 595.53M112.14 603.47Q134.50 605.97 156.86 603.47M106.62 614.94Q134.50 617.44 162.38 614.94M106.62 627.66Q134.50 630.16 162.38 627.66M112.14 639.13Q134.50 641.63 156.86 639.13M122.09 647.07Q134.50 649.57 146.91 647.07" fill="none" stroke="#8fd4f2" stroke-width="1.6" stroke-opacity="0.35" filter="url(#sp1f)"/></g><circle cx="134.5" cy="621.3" r="28.6" fill="url(#sp1r)"/></svg>
<div class="t" style="left:40.00px;top:656.80px;font-size:11.2px;color:#c4c4c4">Water</div>
<svg class="a" style="left:98px;top:660px" width="7" height="7" viewBox="0 0 7 7"><circle cx="3.2" cy="3.3" r="2.3" fill="#5cb8ea" stroke="#1a3a50" stroke-width="0.6"/></svg>
<div class="t" style="left:106.30px;top:656.80px;font-size:11.2px;color:#c4c4c4">WaterMater...</div>
</body></html>
